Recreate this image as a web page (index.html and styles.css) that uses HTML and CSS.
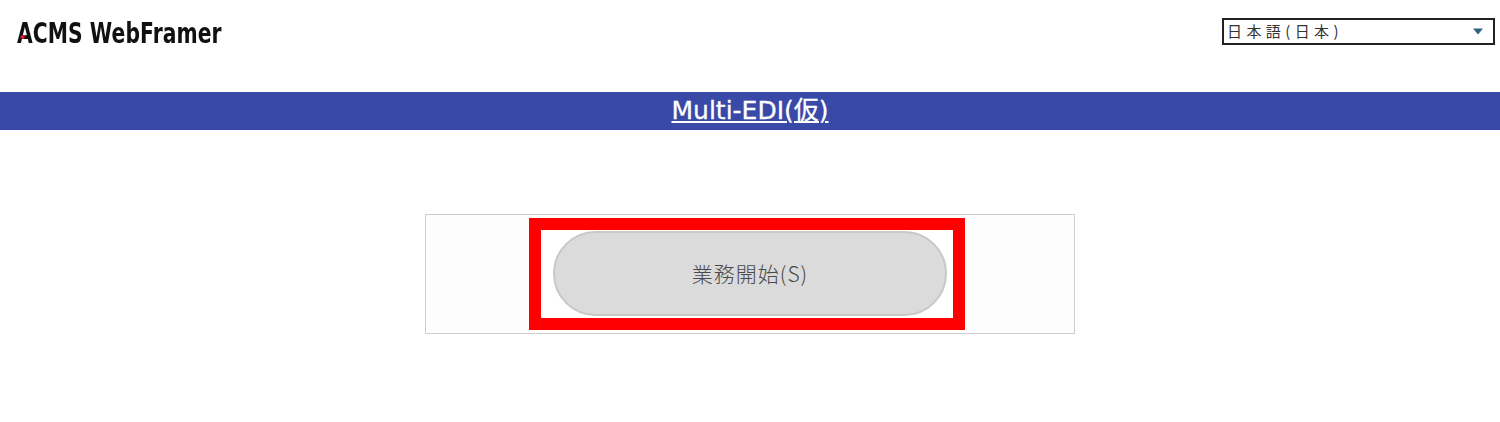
FILE: index.html
```html
<!DOCTYPE html>
<html lang="ja">
<head>
<meta charset="utf-8">
<title>Multi-EDI(仮)</title>
<link rel="stylesheet" href="styles.css">
</head>
<body>
<header class="top">
  <div class="logo"><span class="logo-a">A<i class="logo-dot"></i></span>CMS WebFramer</div>
  <div class="lang">
    <span class="lang-text">日本語(日本)</span>
    <svg class="lang-arrow" viewBox="0 0 10 7" width="10" height="7"><path d="M0 0.5H10L5 6.5Z" fill="#2f6480"/></svg>
  </div>
</header>
<div class="band"><a class="band-link" href="#">Multi-EDI(仮)</a></div>
<main class="main">
  <section class="panel">
    <div class="frame">
      <button class="start" type="button">業務開始(S)</button>
    </div>
  </section>
</main>
</body>
</html>
```
FILE: styles.css
```css
* { box-sizing: border-box; }
html, body { margin: 0; padding: 0; background: #fff; }
body { width: 1500px; height: 422px; overflow: hidden; font-family: "Noto Sans CJK JP", "Liberation Sans", sans-serif; }
.top { height: 92px; display: flex; justify-content: space-between; align-items: flex-start; padding: 18px 5px 0 17px; }
.logo { font-family: "DejaVu Sans", sans-serif; font-weight: 700; font-size: 29px; line-height: 30px; color: #111; letter-spacing: 0.1px; white-space: nowrap; transform: scaleX(0.7); transform-origin: left center; filter: blur(0.4px); }
.logo-a { position: relative; }
.logo-dot { position: absolute; left: 5px; top: 19px; width: 6px; height: 4px; background: #f0102c; border-radius: 50%; }
.lang { width: 273px; height: 27px; border: 2px solid #222; display: flex; align-items: center; justify-content: space-between; padding: 0 10px 0 3px; background: #fff; }
.lang-text { font-size: 15px; font-weight: 400; letter-spacing: 4.4px; color: #333; line-height: 20px; margin-top: -2px; }
.lang-arrow { display: block; }
.band { height: 38px; background: #3949a8; display: flex; align-items: center; justify-content: center; }
.band-link { color: #fff; font-family: "DejaVu Sans", "Noto Sans CJK JP", sans-serif; font-size: 25px; line-height: 30px; font-weight: 400; -webkit-text-stroke: 0.3px #fff; text-decoration: underline; text-decoration-thickness: 2px; text-underline-offset: 2px; }
.main { display: flex; justify-content: center; padding-top: 84px; }
.panel { width: 650px; height: 120px; border: 1px solid #cfcfcf; background: #fdfdfd; display: flex; align-items: center; justify-content: center; padding-right: 6px; }
.frame { width: 436px; height: 112px; border: 12px solid #ff0000; background: #fff; padding: 1px 6px 2px 12px; display: flex; }
.start { width: 394px; height: 85px; border: 2px solid #c8c8c8; border-radius: 43px; background: #dbdbdb; color: #4a4a4a; font-family: "Noto Sans CJK JP", sans-serif; font-size: 21px; font-weight: 300; letter-spacing: 1px; padding: 0 0 2px; }
```
